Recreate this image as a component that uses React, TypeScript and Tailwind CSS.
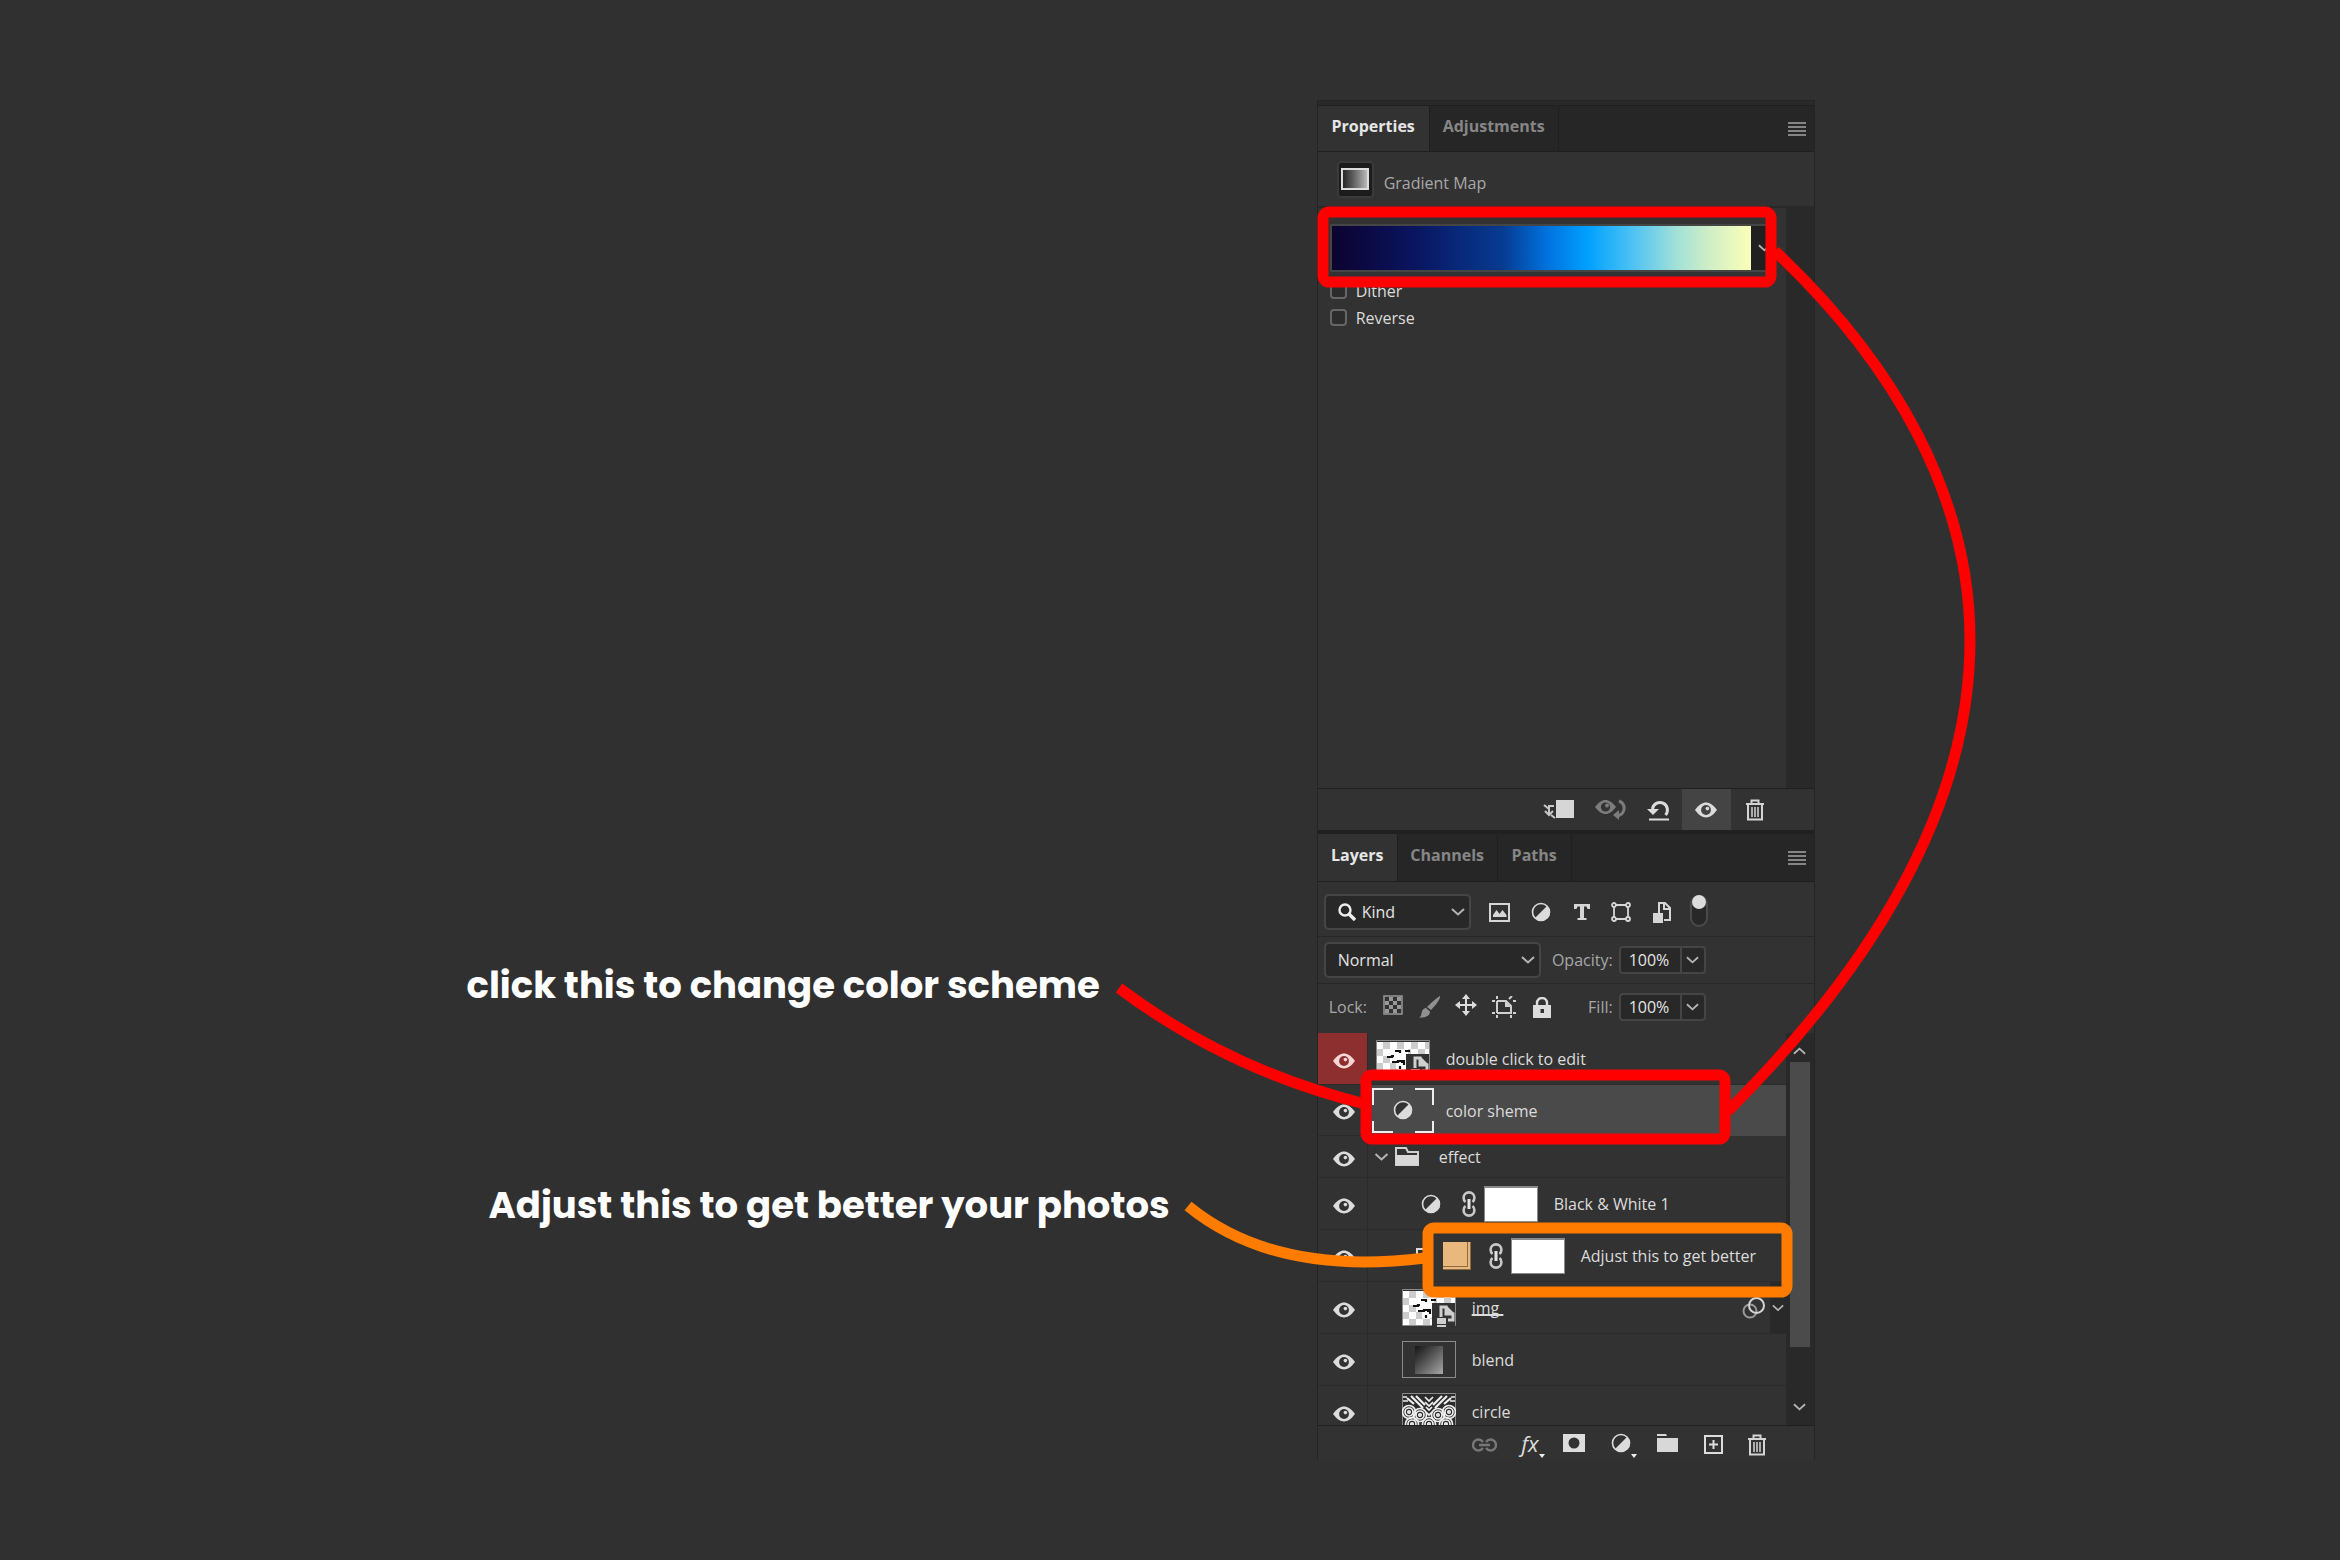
import type { ReactNode } from "react";

const Eye = ({ color = "#dcdcdc", pupil = "#323232" }: { color?: string; pupil?: string }) => (
  <svg width="22" height="16" viewBox="0 0 22 16" aria-hidden="true">
    <path d="M0 8C4 2.600 7.400 .6 11 .6S18 2.600 22 8c-4 5.400-7.400 7.400-11 7.400S4 13.400 0 8Z" fill={color} />
    <circle cx="11" cy="8" r="4.900" fill={pupil} />
    <circle cx="12.400" cy="6.600" r="1.800" fill={color} />
  </svg>
);

const Chevron = ({ w = 14 }: { w?: number }) => (
  <svg width={w} height="8" viewBox="0 0 14 8" fill="none" stroke="#b4b4b4" strokeWidth="2" aria-hidden="true">
    <path d="M1 1l6 5.500L13 1" />
  </svg>
);

const HalfCircle = () => (
  <svg width="20" height="20" viewBox="0 0 20 20" aria-hidden="true">
    <circle cx="10" cy="10" r="8.500" fill="#323232" stroke="#dcdcdc" strokeWidth="1.600" />
    <path d="M16 4A8.500 8.500 0 1 1 4 16Z" fill="#dcdcdc" />
  </svg>
);

const Trash = () => (
  <svg width="20" height="22" viewBox="0 0 20 22" fill="none" stroke="#d4d4d4" strokeWidth="2" aria-hidden="true">
    <path d="M1 5h18M3 5v15.500h14V5M6.500 4.500V1.500h7v3" />
    <path d="M7 8v10M10 8v10M13 8v10" strokeWidth="1.500" />
  </svg>
);

const Link = () => (
  <svg width="14" height="26" viewBox="0 0 14 26" fill="none" stroke="#c8c8c8" strokeWidth="2.600" aria-hidden="true">
    <path d="M3.500 11C2 9.800 1.600 8.500 1.600 6.800a5.400 5.400 0 0 1 10.800 0c0 1.700-.4 3-1.900 4.200M3.500 15c-1.500 1.200-1.900 2.500-1.900 4.200a5.400 5.400 0 0 0 10.800 0c0-1.700-.4-3-1.900-4.200" />
    <path d="M7 8v10" stroke="#e4e4e4" strokeWidth="3" />
  </svg>
);

const Menu = () => (
  <button aria-label="Panel menu" className="ml-auto mr-2 grid w-[18px] gap-[2px] self-center">
    <span className="h-[2px] bg-[#858585]" />
    <span className="h-[2px] bg-[#858585]" />
    <span className="h-[2px] bg-[#858585]" />
    <span className="h-[2px] bg-[#858585]" />
  </button>
);

const SmartThumb = ({ id }: { id: string }) => (
  <svg width="54" height="38" viewBox="0 0 54 38" aria-hidden="true">
    <defs>
      <pattern id={id} width="14" height="14" patternUnits="userSpaceOnUse">
        <path d="M0 0h14v14H0Z" fill="#fff" />
        <path d="M7 2h7v7H7ZM0 9h7v5H0ZM0 0h7v2H0Z" fill="#ccc" />
      </pattern>
    </defs>
    <path d="M.5 .5h53v36H.5Z" fill="#323232" stroke="#8a8a8a" />
    <path d="M1 2h52v34H1Z" fill={`url(#${id})`} />
    <path d="M14 9h18v20H20V20h-6Z" fill="#fff" />
    <path
      d="M19 11h5v2M29 11h5M11 17h5v-1h2M16 22h6v-1h4v2M28 20v5M24 26v3"
      fill="none"
      stroke="#111"
      strokeWidth="2.200"
    />
    <path d="M30 14h23v23H30Z" fill="#323232" />
    <path d="M39 28V18h5v7h7v6h-5" fill="none" stroke="#cfcfcf" strokeWidth="3" />
    <path d="M45 17v7h7Z" fill="#cfcfcf" />
    <path d="M35 29h9v6h-9ZM35 36h9v2h-9Z" fill="#cfcfcf" />
  </svg>
);

const arcs = (cx: number, cy: number) => (
  <g>
    <circle cx={cx} cy={cy} r="1.200" />
    <circle cx={cx} cy={cy} r="4" />
    <circle cx={cx} cy={cy} r="6.500" />
  </g>
);

const PatternThumb = () => (
  <svg width="54" height="38" viewBox="0 0 54 38" aria-hidden="true">
    <path d="M.5 .5h53v37H.5Z" fill="#2b2b2b" stroke="#8a8a8a" />
    <g fill="none" stroke="#eee" strokeWidth="1.700">
      {arcs(7, 19)}
      {arcs(47, 19)}
      {arcs(18, 22)}
      {arcs(36, 22)}
      {arcs(10, 31)}
      {arcs(44, 31)}
      {arcs(27, 31)}
      <path d="M9 3l12 12M14 3l9 9M5 5l7 6M45 3L33 15M40 3l-9 9M49 5l-7 6" strokeWidth="2.200" />
      <path d="M23 4l4 4 4-4M23 9l4 4 4-4M24 14l3 3 3-3M24 19l3 3 3-3M1 4h4M49 4h4M1 8h5M48 8h5" />
    </g>
  </svg>
);

const Mask = () => <span className="h-9 w-[54px] shrink-0 border border-[#8a8a8a] border-t-2 bg-white" />;

type RowProps = {
  name: string;
  h: string;
  pad: string;
  gap: string;
  children: ReactNode;
  tail?: ReactNode;
  red?: boolean;
  selected?: boolean;
  underline?: boolean;
};

function Row({ name, h, pad, gap, children, tail, red, selected, underline }: RowProps) {
  return (
    <li className={`flex shrink-0 ${h}`}>
      <button
        aria-label={`Toggle visibility of ${name}`}
        className={`grid w-[50px] shrink-0 place-items-center border-b border-r border-[#2b2b2b] pt-1 pl-[3px] ${red ? "bg-[#8d2f2f]" : ""}`}
      >
        {red ? <Eye color="#f6d5d5" pupil="#8d2f2f" /> : <Eye />}
      </button>
      <div
        className={`flex min-w-0 grow items-center border-b ${pad} ${selected ? "border-[#4a4a4a] bg-[#4a4a4a]" : "border-[#2b2b2b]"}`}
      >
        {children}
        <button
          className={`${gap} whitespace-pre pt-px text-[#dcdcdc] ${underline ? "underline decoration-2 underline-offset-0 [text-decoration-skip-ink:none]" : ""}`}
        >
          {name}
        </button>
        {tail}
      </div>
    </li>
  );
}

function Tab({ label, active, w }: { label: string; active?: boolean; w: string }) {
  return (
    <button
      role="tab"
      aria-selected={!!active}
      className={`border-r border-[#1f1f1f] pb-[5px] text-center font-bold ${w} ${active ? "bg-[#323232] text-[#e6e6e6]" : "text-[#868686]"}`}
    >
      {label}
    </button>
  );
}

function Percent({ id, label }: { id: string; label: string }) {
  return (
    <>
      <label htmlFor={id} className="w-[62px] text-right text-[#a8a8a8]">
        {label}
      </label>
      <div className="ml-[6px] flex h-7 w-[87px] rounded border-2 border-[#454545] bg-[#282828]">
        <input id={id} defaultValue="100%" className="w-[59px] bg-transparent pl-2 text-[#e4e4e4] outline-none" />
        <button aria-label={`${label} slider`} className="grid grow place-items-center border-l-2 border-[#454545]">
          <Chevron w={13} />
        </button>
      </div>
    </>
  );
}

function Picker({ label, options, className }: { label: string; options: string[]; className: string }) {
  return (
    <select
      aria-label={label}
      className={`h-9 appearance-none rounded-[5px] border-2 border-[#454545] bg-[#282828] text-[#e4e4e4] outline-none ${className}`}
    >
      {options.map((o) => (
        <option key={o}>{o}</option>
      ))}
    </select>
  );
}

function PropertiesPanel() {
  return (
    <section aria-label="Properties">
      <div role="tablist" className="flex h-[46px] border-b border-[#1f1f1f] bg-[#262626]">
        <Tab label="Properties" active w="w-[112px]" />
        <Tab label="Adjustments" w="w-[129px]" />
        <Menu />
      </div>
      <header className="flex h-14 items-center border-b-2 border-[#292929] pl-[19px] text-[#a8a8a8]">
        <span className="grid size-[37px] place-items-center rounded-[4px] border-2 border-[#3a3a3a] bg-[#1c1c1c]">
          <span className="h-[22px] w-7 border-2 border-[#dcdcdc] bg-linear-to-r from-[#262626] to-[#b8b8b8]" />
        </span>
        <h2 className="ml-[10px] pt-2">Gradient Map</h2>
      </header>
      <div className="flex h-[580px]">
        <div className="grow pl-3 pt-4">
          <button
            aria-label="Edit gradient"
            className="flex h-12 w-[446px] items-stretch border-2 border-[#454545] bg-[#202020]"
          >
            <span className="w-[419px] bg-[linear-gradient(90deg,#0c0230_0%,#0a1560_20%,#063c92_41%,#0070dc_51%,#00a0ff_61%,#48c0f4_71%,#a0e0d8_82%,#d4f0c4_91%,#fbffb8_100%)]" />
            <span className="grid grow place-items-center pl-1">
              <Chevron w={13} />
            </span>
          </button>
          {["Dither", "Reverse"].map((n) => (
            <label key={n} className="flex h-[27px] items-center gap-[9px] first-of-type:mt-[5px] text-[#dcdcdc]">
              <input
                type="checkbox"
                className="size-[17px] appearance-none rounded-[4px] border-2 border-[#666] bg-[#2c2c2c]"
              />
              {n}
            </label>
          ))}
        </div>
        <div className="w-7 bg-[#292929]" />
      </div>
      <footer className="flex h-[42px] items-center justify-end border-t border-[#1f1f1f] pr-[49px]">
        <button aria-label="Clip to layer">
          <svg width="32" height="22" viewBox="0 0 32 22" aria-hidden="true">
            <path d="M13 1h18v18H13Z" fill="#d6d6d6" />
            <path d="M1 6l5 4M11 7H6v8M2 12l4 4 4-4M8 16l4 3" fill="none" stroke="#c8c8c8" strokeWidth="2" />
          </svg>
        </button>
        <button aria-label="View previous state" className="ml-5">
          <svg width="32" height="22" viewBox="0 0 32 22" aria-hidden="true">
            <path d="M0 8C4 3 7 1 10.500 1S17 3 21 8c-4 5-7 7-10.500 7S4 13 0 8Z" fill="#7c7c7c" />
            <circle cx="10.500" cy="8" r="4.600" fill="#323232" />
            <circle cx="12" cy="6.500" r="2" fill="#7c7c7c" />
            <path d="M24 2c7 3 7 12-1 15" fill="none" stroke="#7c7c7c" strokeWidth="3" />
            <path d="M18 16l6-5v10Z" fill="#7c7c7c" />
          </svg>
        </button>
        <button aria-label="Reset" className="ml-5">
          <svg width="23" height="22" viewBox="0 0 23 22" aria-hidden="true">
            <path d="M5.500 10a7.500 7.500 0 1 1 13 6" fill="none" stroke="#dcdcdc" strokeWidth="3" />
            <path d="M0 10h12l-6 6Z" fill="#dcdcdc" />
            <path d="M2 20.500h20" stroke="#dcdcdc" strokeWidth="2" />
          </svg>
        </button>
        <button aria-label="Toggle layer visibility" className="ml-3 grid h-full w-[49px] place-items-center bg-[#444]">
          <Eye pupil="#444444" />
        </button>
        <button aria-label="Delete adjustment" className="ml-[14px]">
          <Trash />
        </button>
      </footer>
    </section>
  );
}

function FilterRow() {
  return (
    <div className="flex h-[54px] items-center pl-[6px] pt-[6px]">
      <div className="relative flex items-center">
        <Picker label="Filter type" options={["Kind", "Name", "Effect"]} className="w-[147px] pl-9" />
        <svg className="pointer-events-none absolute left-[14px]" width="18" height="18" viewBox="0 0 18 18" fill="none" stroke="#eee" aria-hidden="true">
          <circle cx="7" cy="7" r="5.500" strokeWidth="2.400" />
          <path d="M11 11l6 6" strokeWidth="3.400" />
        </svg>
        <span className="pointer-events-none absolute right-[6px]">
          <Chevron />
        </span>
      </div>
      <button aria-label="Pixel layers" className="ml-[18px]">
        <svg width="21" height="19" viewBox="0 0 21 19" aria-hidden="true">
          <path d="M1 1h19v17H1Z" fill="none" stroke="#d6d6d6" strokeWidth="2" />
          <path d="M4 14V12l3.500-5 3 4 3-4 4 5v2Z" fill="#d6d6d6" />
        </svg>
      </button>
      <button aria-label="Adjustment layers" className="ml-[21px]">
        <HalfCircle />
      </button>
      <button aria-label="Type layers" className="ml-[22px]">
        <svg width="18" height="18" viewBox="0 0 18 18" aria-hidden="true">
          <path d="M1 1h16v5h-2.500L13.500 3.500H11V15h2.500v2h-9v-2H7V3.500H4.500L3.500 6H1Z" fill="#d6d6d6" />
        </svg>
      </button>
      <button aria-label="Shape layers" className="ml-5">
        <svg width="20" height="20" viewBox="0 0 20 20" fill="none" stroke="#d6d6d6" strokeWidth="1.800" aria-hidden="true">
          <path d="M5 3h10M5 17h10M3 5v10M17 5v10" />
          <circle cx="3" cy="3" r="2" />
          <circle cx="17" cy="3" r="2" />
          <circle cx="3" cy="17" r="2" />
          <circle cx="17" cy="17" r="2" />
        </svg>
      </button>
      <button aria-label="Smart objects" className="ml-[22px]">
        <svg width="19" height="21" viewBox="0 0 19 21" aria-hidden="true">
          <path d="M6 11V1h6l5 5v12h-6" fill="none" stroke="#d6d6d6" strokeWidth="2" />
          <path d="M11 1v6h6" fill="none" stroke="#d6d6d6" strokeWidth="2" />
          <path d="M0 11h10v10H0Z" fill="#d6d6d6" />
        </svg>
      </button>
      <button
        role="switch"
        aria-checked="true"
        aria-label="Layer filtering"
        className="ml-[18px] mb-[2px] h-8 w-[18px] rounded-full border-2 border-[#4a4a4a] bg-[#282828]"
      >
        <span className="-mt-4 block size-[14px] rounded-full bg-[#dcdcdc]" />
      </button>
    </div>
  );
}

function LockRow() {
  return (
    <div className="flex h-[50px] items-center border-t border-[#272727] pl-[11px] pb-[3px]">
      <span className="w-11 text-[#a8a8a8]">Lock:</span>
      <button aria-label="Lock transparent pixels" className="ml-[10px] mb-1">
        <svg width="20" height="20" viewBox="0 0 20 20" fill="#989898" aria-hidden="true">
          <path d="M1 1h18v18H1Z" fill="none" stroke="#989898" strokeWidth="1.500" />
          <path d="M6 2h4v4H6ZM14 2h4v4h-4ZM2 6h4v4H2ZM10 6h4v4h-4ZM6 10h4v4H6ZM14 10h4v4h-4ZM2 14h4v4H2ZM10 14h4v4h-4Z" />
        </svg>
      </button>
      <button aria-label="Lock image pixels" className="ml-4">
        <svg width="22" height="22" viewBox="0 0 22 22" fill="#909090" aria-hidden="true">
          <path d="M21 0c1 2-4 9-9 14l-4-3C13 6 19 1 21 0ZM7 12l4 3.500C11 20 6 22 0 21.500c2.500-1 2-3 3-6C3.600 13.500 5.500 12 7 12Z" />
        </svg>
      </button>
      <button aria-label="Lock position" className="ml-[14px] mb-1">
        <svg width="22" height="22" viewBox="0 0 22 22" fill="#dcdcdc" aria-hidden="true">
          <path d="M11 0l4 5h-3v5h5V7l5 4-5 4v-3h-5v5h3l-4 5-4-5h3v-5H5v3l-5-4 5-4v3h5V5H7Z" />
        </svg>
      </button>
      <button aria-label="Lock artboard" className="ml-[15px]">
        <svg width="24" height="22" viewBox="0 0 24 22" fill="none" stroke="#d0d0d0" strokeWidth="2" aria-hidden="true">
          <path d="M5 0v3M5 5v12M5 19v3M0 5h3M0 17h3M19 19v3M21 17h3M17 3l3-3M5 5h9l5 5v7H5M21 5h3" />
          <path d="M13 5v6h6Z" fill="#d0d0d0" stroke="none" />
        </svg>
      </button>
      <button aria-label="Lock all" className="ml-[17px]">
        <svg width="18" height="21" viewBox="0 0 18 21" aria-hidden="true">
          <path d="M0 8h18v13H0ZM7.500 12v4h3.500v-4Z" fill="#dcdcdc" fillRule="evenodd" />
          <path d="M4 9V6a5 5 0 0 1 10 0v3" fill="none" stroke="#dcdcdc" strokeWidth="2.400" />
        </svg>
      </button>
      <Percent id="fill" label="Fill:" />
    </div>
  );
}

function LayersPanel() {
  return (
    <section aria-label="Layers">
      <div role="tablist" className="flex h-12 border-b border-[#1f1f1f] bg-[#262626]">
        <Tab label="Layers" active w="w-[80px]" />
        <Tab label="Channels" w="w-[100px]" />
        <Tab label="Paths" w="w-[74px]" />
        <Menu />
      </div>
      <FilterRow />
      <div className="flex h-[47px] items-center border-t border-[#272727] pl-[6px]">
        <div className="relative flex items-center">
          <Picker label="Blend mode" options={["Normal", "Multiply", "Screen"]} className="w-[217px] pl-3" />
          <span className="pointer-events-none absolute right-[6px]">
            <Chevron />
          </span>
        </div>
        <span className="w-[10px]" />
        <Percent id="opacity" label="Opacity:" />
      </div>
      <LockRow />
      <div className="flex h-[392px]">
        <ul className="flex min-w-0 grow flex-col overflow-hidden">
          <Row name="double click to edit" h="h-[52px]" pad="pl-2" gap="ml-4" red>
            <SmartThumb id="check-a" />
          </Row>
          <Row name="color sheme" h="h-[51px]" pad="pl-1" gap="ml-3" selected>
            <span className="relative grid h-[45px] w-[62px] place-items-center">
              <svg className="absolute inset-0" width="62" height="45" viewBox="0 0 62 45" fill="none" stroke="#eee" strokeWidth="2" aria-hidden="true">
                <path d="M1 17V1h20M43 1h18v16M61 33v11H43M21 44H1V33" />
              </svg>
              <HalfCircle />
            </span>
          </Row>
          <Row name="effect" h="h-[42px]" pad="pl-[6px]" gap="ml-5">
            <Chevron w={15} />
            <svg className="ml-[6px]" width="24" height="19" viewBox="0 0 24 19" aria-hidden="true">
              <path d="M1 18V1h10l2 4h10v13Z" fill="none" stroke="#d0d0d0" strokeWidth="2" />
              <path d="M1 8h22v10H1Z" fill="#d8d8d8" />
            </svg>
          </Row>
          <Row name="Black & White 1" h="h-[52px]" pad="pl-[53px]" gap="ml-4">
            <HalfCircle />
            <span className="ml-[21px] mr-2">
              <Link />
            </span>
            <Mask />
          </Row>
          <Row name="Adjust this to get better" h="h-[52px]" pad="pl-12" gap="ml-4">
            <span className="mb-2 h-2 w-3 border-l-2 border-t-2 border-[#dcdcdc]" />
            <span className="ml-[15px] size-7 border-b-4 border-r-4 border-double border-[#8d6a42] bg-[#e8b87c]" />
            <span className="ml-[18px] mr-2">
              <Link />
            </span>
            <Mask />
          </Row>
          <Row
            name="img "
            h="h-[52px]"
            pad="pl-[34px]"
            gap="ml-4"
            underline
            tail={
              <>
                <svg className="ml-auto mr-1" width="24" height="22" viewBox="0 0 24 22" fill="none" strokeWidth="2" aria-hidden="true">
                  <circle cx="8" cy="14" r="6.500" stroke="#9a9a9a" />
                  <circle cx="14.500" cy="8.500" r="7.500" stroke="#d4d4d4" />
                </svg>
                <button aria-label="Show filters" className="grid h-full w-4 place-items-center bg-[#292929]">
                  <Chevron w={12} />
                </button>
              </>
            }
          >
            <SmartThumb id="check-b" />
          </Row>
          <Row name="blend" h="h-[52px]" pad="pl-[34px]" gap="ml-4">
            <span className="grid h-[37px] w-[54px] place-items-center border border-[#8a8a8a]">
              <span className="size-7 bg-linear-to-br from-[#161616] to-[#aaaaaa]" />
            </span>
          </Row>
          <Row name="circle" h="h-[52px]" pad="pl-[34px]" gap="ml-4">
            <PatternThumb />
          </Row>
        </ul>
        <div className="flex w-7 shrink-0 flex-col items-center bg-[#292929] pb-[14px] pt-[14px]">
          <span className="rotate-180">
            <Chevron w={13} />
          </span>
          <span className="mt-[7px] h-[285px] w-5 bg-[#4b4b4b]" />
          <span className="mt-auto">
            <Chevron w={13} />
          </span>
        </div>
      </div>
      <footer className="flex h-[35px] items-center justify-end border-t border-[#1f1f1f] pr-[47px] pt-1">
        <button aria-label="Link layers">
          <svg width="25" height="14" viewBox="0 0 25 14" fill="none" stroke="#777" strokeWidth="2.400" aria-hidden="true">
            <path d="M11 4C9.500 2 8.500 1.500 6.500 1.500a5.500 5.500 0 0 0 0 11c2 0 3-.5 4.500-2.500M14 4c1.500-2 2.500-2.500 4.500-2.500a5.500 5.500 0 0 1 0 11c-2 0-3-.5-4.500-2.500M7 7h11" />
          </svg>
        </button>
        <button aria-label="Layer effects" className="ml-6 flex h-7 items-center">
          <span className="pb-1 text-[22px] leading-6 italic text-[#dcdcdc]">fx</span>
          <svg className="self-end" width="6" height="5" viewBox="0 0 6 5" aria-hidden="true">
            <path d="M0 0h6L3 4Z" fill="#eee" />
          </svg>
        </button>
        <button aria-label="Add layer mask" className="ml-[18px] mb-1">
          <svg width="22" height="18" viewBox="0 0 22 18" aria-hidden="true">
            <path d="M0 0h22v18H0Z" fill="#dcdcdc" />
            <circle cx="11" cy="9" r="5.500" fill="#323232" />
          </svg>
        </button>
        <button aria-label="New adjustment layer" className="ml-[26px] flex h-7 items-center">
          <span className="pb-1">
            <HalfCircle />
          </span>
          <svg className="self-end" width="6" height="5" viewBox="0 0 6 5" aria-hidden="true">
            <path d="M0 0h6L3 4Z" fill="#eee" />
          </svg>
        </button>
        <button aria-label="New group" className="mb-1 ml-5">
          <svg width="21" height="18" viewBox="0 0 21 18" fill="#d8d8d8" aria-hidden="true">
            <path d="M0 0h9l1 2H0ZM0 4h21v14H0Z" />
          </svg>
        </button>
        <button aria-label="New layer" className="mb-[2px] ml-[26px]">
          <svg width="19" height="19" viewBox="0 0 19 19" fill="none" stroke="#dcdcdc" strokeWidth="2" aria-hidden="true">
            <path d="M1 1h17v17H1ZM9.500 5v9M5 9.500h9" />
          </svg>
        </button>
        <button aria-label="Delete layer" className="ml-6">
          <Trash />
        </button>
      </footer>
    </section>
  );
}

function Annotations() {
  return (
    <svg
      className="pointer-events-none absolute -left-60 top-0"
      width="920"
      height="1240"
      viewBox="-240 0 920 1240"
      fill="none"
      strokeWidth="11"
      strokeLinejoin="round"
      aria-hidden="true"
    >
      <g stroke="#fe0000">
        <path d="M-198 888Q-89 970 48 1004" />
        <path d="M458 151C578 264 653 397 653 540C653 697 568 854 411 1011" />
        <rect x="6" y="112" width="448" height="70" rx="6" />
        <rect x="49" y="975" width="359" height="64" rx="6" />
      </g>
      <g stroke="#ff7c00">
        <path d="M-129 1106Q-42 1177 108 1158" />
        <rect x="111" y="1128" width="359" height="64" rx="6" />
      </g>
    </svg>
  );
}

export default function App() {
  return (
    <main className="flex min-h-screen bg-[#303030] pt-[100px] font-['Open_Sans','Noto_Sans',sans-serif] text-[16px] leading-6">
      <div className="flex grow flex-col items-end whitespace-nowrap pt-[861px] font-[Poppins,Inter,sans-serif] text-[37px] font-bold leading-[48px] text-white">
        <p className="mr-[217px]">click this to change color scheme</p>
        <p className="mr-[147px] mt-[172px]">Adjust this to get better your photos</p>
      </div>
      <div className="relative w-[498px] shrink-0 self-start">
        <div className="border-x border-t border-[#242424] bg-[#323232]">
          <div className="h-[5px] border-b border-[#1f1f1f] bg-[#2a2a2a]" />
          <PropertiesPanel />
          <div className="h-1 bg-[#212121]" />
          <LayersPanel />
        </div>
        <Annotations />
      </div>
      <div className="w-[22.45%] shrink-0" />
    </main>
  );
}
